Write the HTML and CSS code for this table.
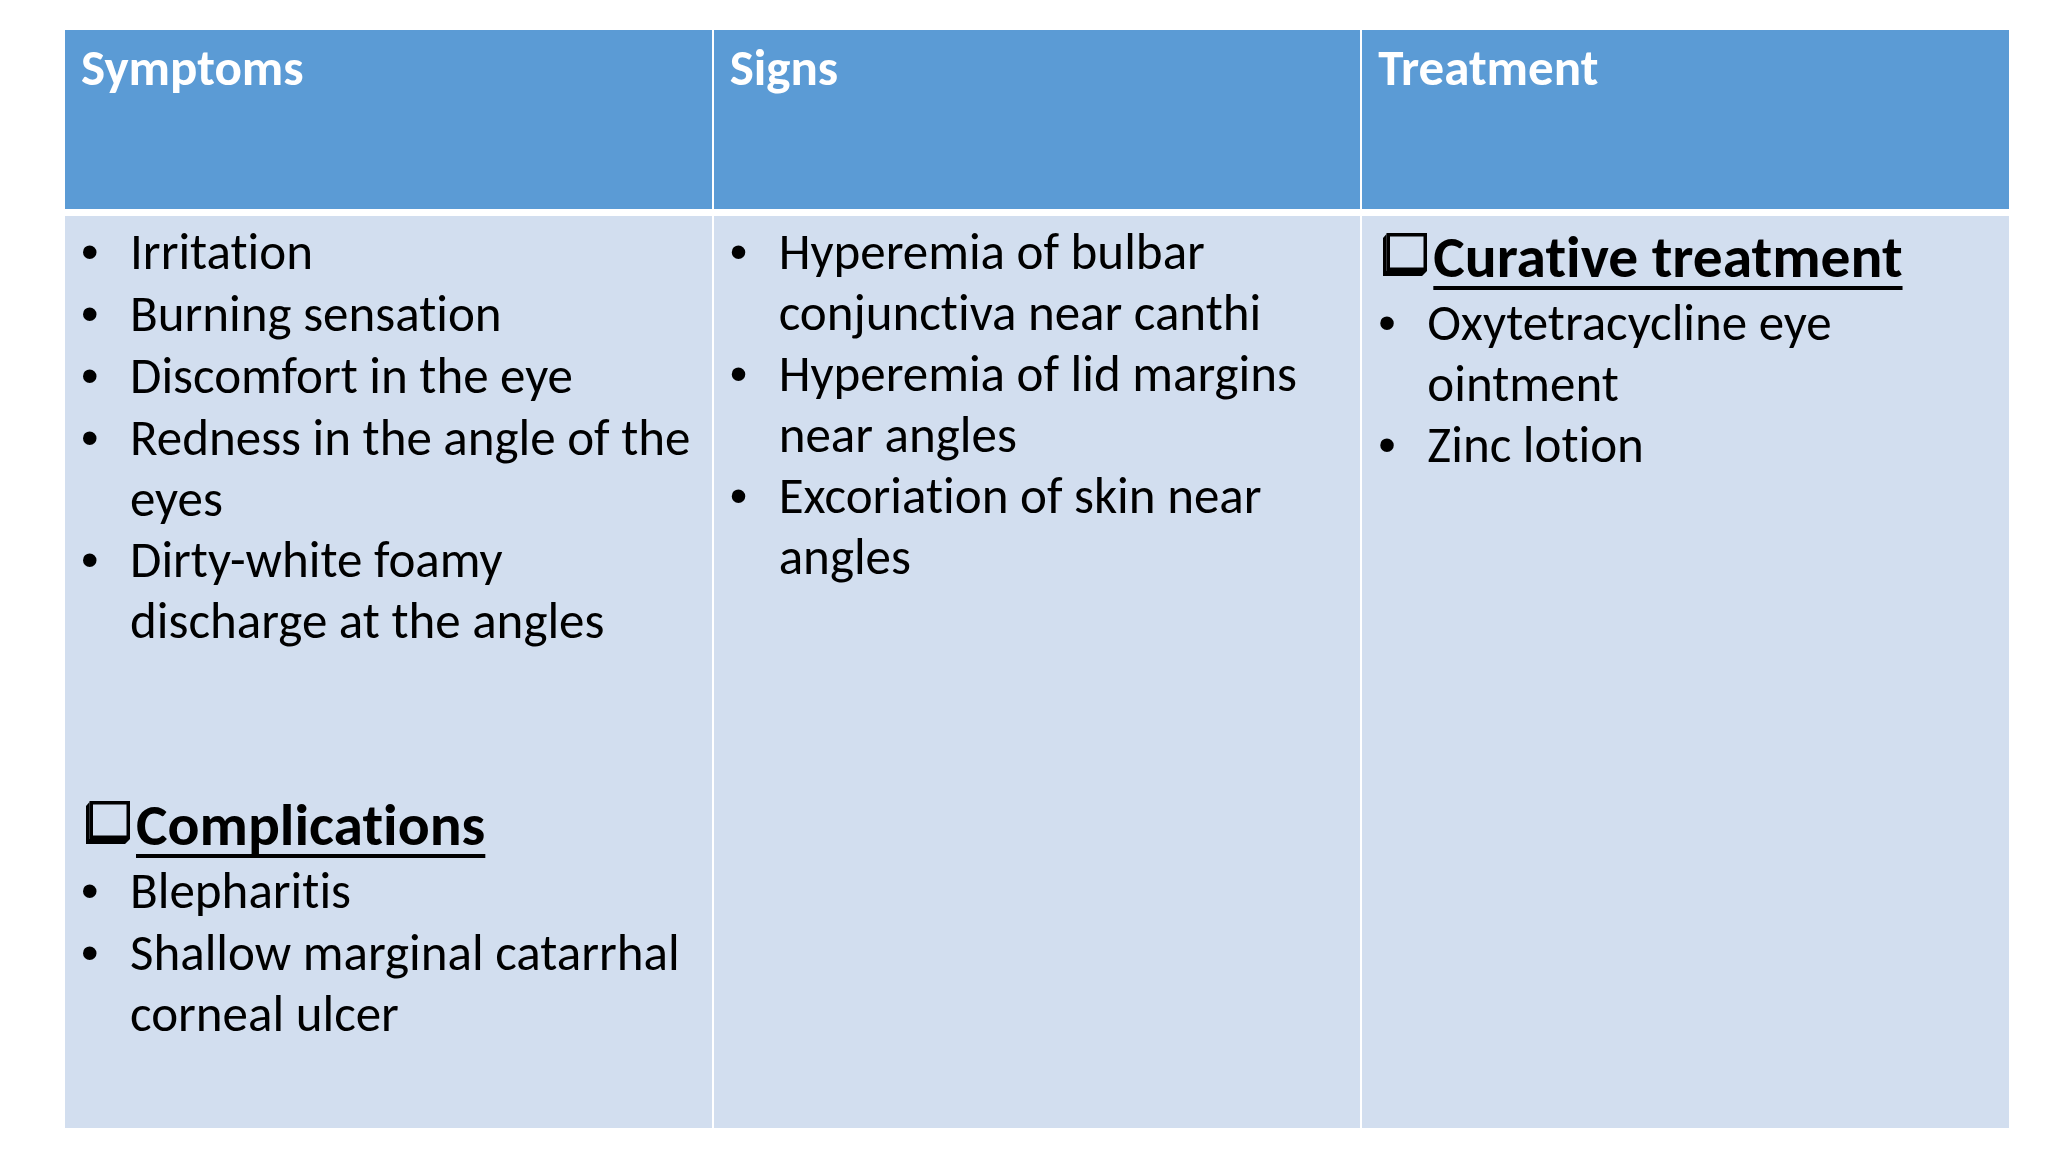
FILE: index.html
```html
<!DOCTYPE html>
<html lang="en">
<head>
<meta charset="utf-8">
<title>Symptoms, Signs, Treatment</title>
<link rel="stylesheet" href="styles.css">
</head>
<body>
<main class="slide">
  <div class="table">
    <div class="th">Symptoms</div>
    <div class="th">Signs</div>
    <div class="th">Treatment</div>

    <div class="td">
      <ul class="list">
        <li><span class="dot">•</span><span class="txt">Irritation</span></li>
        <li><span class="dot">•</span><span class="txt">Burning sensation</span></li>
        <li><span class="dot">•</span><span class="txt">Discomfort in the eye</span></li>
        <li><span class="dot">•</span><span class="txt">Redness in the angle of the<br>eyes</span></li>
        <li><span class="dot">•</span><span class="txt">Dirty-white foamy<br>discharge at the angles</span></li>
      </ul>
      <h3 class="sub sub-gap"><svg class="sq" viewBox="0 0 44 43" aria-hidden="true"><polygon points="3.5,1 0,5 0,43 39,43 44,38 3.5,38" fill="#000"/><rect x="5.25" y="1.75" width="37" height="34.5" fill="none" stroke="#000" stroke-width="3.5"/></svg><span class="sub-t">Complications</span></h3>
      <ul class="list">
        <li><span class="dot">•</span><span class="txt">Blepharitis</span></li>
        <li><span class="dot">•</span><span class="txt">Shallow marginal catarrhal<br>corneal ulcer</span></li>
      </ul>
    </div>

    <div class="td">
      <ul class="list">
        <li><span class="dot">•</span><span class="txt">Hyperemia of bulbar<br>conjunctiva near canthi</span></li>
        <li><span class="dot">•</span><span class="txt">Hyperemia of lid margins<br>near angles</span></li>
        <li><span class="dot">•</span><span class="txt">Excoriation of skin near<br>angles</span></li>
      </ul>
    </div>

    <div class="td">
      <h3 class="sub"><svg class="sq" viewBox="0 0 44 43" aria-hidden="true"><polygon points="3.5,1 0,5 0,43 39,43 44,38 3.5,38" fill="#000"/><rect x="5.25" y="1.75" width="37" height="34.5" fill="none" stroke="#000" stroke-width="3.5"/></svg><span class="sub-t">Curative treatment</span></h3>
      <ul class="list">
        <li><span class="dot">•</span><span class="txt">Oxytetracycline eye<br>ointment</span></li>
        <li><span class="dot">•</span><span class="txt">Zinc lotion</span></li>
      </ul>
    </div>
  </div>
</main>
</body>
</html>
```

FILE: styles.css
```css
html, body {
  margin: 0;
  padding: 0;
  background: #ffffff;
}

body {
  font-family: Carlito, Lato, "Liberation Sans", sans-serif;
  font-variant-ligatures: none;
  font-feature-settings: "liga" 0, "clig" 0;
  color: #000;
}

.slide {
  width: 2048px;
  height: 1152px;
  padding: 30px 0 0 65px;
  box-sizing: border-box;
}

.table {
  width: 1944px;
  display: grid;
  grid-template-columns: repeat(3, minmax(0, 1fr));
  grid-template-rows: 179px 912px;
  column-gap: 2px;
  row-gap: 7px;
}

.th {
  background: #5b9bd5;
  color: #ffffff;
  font-weight: 700;
  font-size: 51px;
  line-height: 58px;
  padding: 9px 16px 0;
}

.td {
  background: #d2deef;
  padding-top: 5px;
  font-size: 51px;
  line-height: 61px;
  overflow: hidden;
}

.list {
  list-style: none;
  margin: 0;
  padding: 0;
}

.list li {
  display: flex;
  align-items: baseline;
  white-space: nowrap;
}

.dot {
  flex: 0 0 65px;
  box-sizing: border-box;
  padding-left: 16px;
  font-family: "Liberation Sans", Arial, sans-serif;
  font-size: 50px;
}

.sub {
  margin: 0;
  display: flex;
  align-items: flex-start;
  font-size: 59.5px;
  line-height: 71px;
  font-weight: 700;
  white-space: nowrap;
}

.sub-gap {
  margin-top: 138px;
}

.sq {
  width: 44px;
  height: 43px;
  margin: 12px 6px 0 21px;
  flex: 0 0 44px;
}

.sub-t {
  text-decoration: underline;
  text-decoration-thickness: 4px;
  text-underline-offset: 9px;
}
```
